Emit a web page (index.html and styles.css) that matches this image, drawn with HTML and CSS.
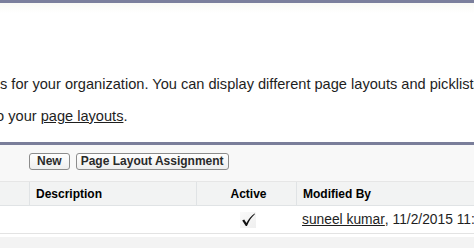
FILE: index.html
```html
<!DOCTYPE html>
<html>
<head>
<meta charset="utf-8">
<link rel="stylesheet" href="styles.css">
</head>
<body>
<div class="page">
  <div class="topbar"></div>
  <div class="topfade"></div>
  <div class="intro">
    <p class="line1">s for your organization. You can display different page layouts and picklists</p>
    <p class="line2">to your <a href="#">page layouts</a>.</p>
  </div>
  <div class="separator"></div>
  <div class="buttons">
    <button class="btn">New</button>
    <button class="btn">Page Layout Assignment</button>
  </div>
  <div class="table">
    <div class="row head">
      <div class="cell c-action"></div>
      <div class="cell c-desc">Description</div>
      <div class="cell c-active">Active</div>
      <div class="cell c-mod">Modified By</div>
    </div>
    <div class="row data">
      <div class="cell c-action"></div>
      <div class="cell c-desc"></div>
      <div class="cell c-active"><span class="checkbox"><svg class="check" viewBox="0 0 16 16" width="16" height="16"><path d="M2.2 8.6 L4.2 7.6 L6.4 11 C8.6 7 11 4 14.6 1.4 L15 2 C11.6 5 9.2 8.6 7 14 L5.8 14 Z" fill="#111"/></svg></span></div>
      <div class="cell c-mod"><a href="#">suneel kumar</a>, 11/2/2015 11:48 AM</div>
    </div>
  </div>
  <div class="footer"></div>
</div>
</body>
</html>
```
FILE: styles.css
```css
html, body {
  margin: 0;
  padding: 0;
  background: #ffffff;
}
.page {
  width: 474px;
  height: 248px;
  overflow: hidden;
  font-family: "Liberation Sans", Arial, sans-serif;
  color: #1e1e1e;
}
.topbar {
  height: 3px;
  background: #7b7f9c;
}
.topfade {
  height: 10px;
  background: linear-gradient(#f9f9f4, #ffffff);
}
.intro {
  padding-top: 61px;
  height: 68px;
  font-size: 14.6px;
  color: #1e1e1e;
}
.intro p {
  margin: 0;
  line-height: 20px;
  white-space: nowrap;
}
.intro .line1 {
  margin-left: 0;
}
.intro .line2 {
  margin-top: 12px;
  margin-left: -8px;
}
.intro a {
  color: #1e1e1e;
  text-decoration: underline;
}
.separator {
  height: 3px;
  background: #7a7e9a;
}
.buttons {
  background: #f8f8f8;
  height: 36px;
  display: flex;
  align-items: flex-start;
  gap: 6px;
  padding-left: 29px;
  padding-top: 8px;
  box-sizing: border-box;
}
.btn {
  font-family: "Liberation Sans", Arial, sans-serif;
  font-weight: bold;
  font-size: 12px;
  color: #2a2a2a;
  height: 17px;
  padding: 0 4px;
  line-height: 15px;
  border: 1px solid #8c8c8c;
  border-radius: 3px;
  background: linear-gradient(#ffffff, #eeeeee);
}
.btn:first-child {
  padding: 0 7px;
}
.table {
  background: #ffffff;
}
.row {
  display: flex;
}
.head {
  height: 25px;
  background: #f2f3f3;
  border-top: 1px solid #e6e6e6;
  border-bottom: 1px solid #e0e3e5;
  box-sizing: border-box;
  font-weight: bold;
  font-size: 12px;
  color: #000;
}
.data {
  height: 28px;
  background: #ffffff;
  border-bottom: 1px solid #e3e3e3;
  box-sizing: border-box;
  font-size: 13.8px;
  color: #1e1e1e;
}
.cell {
  display: flex;
  align-items: center;
  box-sizing: border-box;
  padding: 0 6px;
  white-space: nowrap;
}
.head .cell + .cell {
  border-left: 1px solid #e0e3e5;
}
.c-action { width: 29px; flex: none; }
.c-desc { width: 167px; flex: none; }
.c-active { width: 100px; flex: none; justify-content: center; padding-left: 10px; }
.c-mod { flex: 1; }
.c-mod a {
  color: #1e1e1e;
  text-decoration: underline;
}
.checkbox {
  display: block;
  width: 16px;
  height: 16px;
  background: linear-gradient(135deg, #fafafa, #efefef);
}
.check {
  display: block;
}
.footer {
  height: 20px;
  margin-top: 3px;
  background: #f3f3f3;
}
```
